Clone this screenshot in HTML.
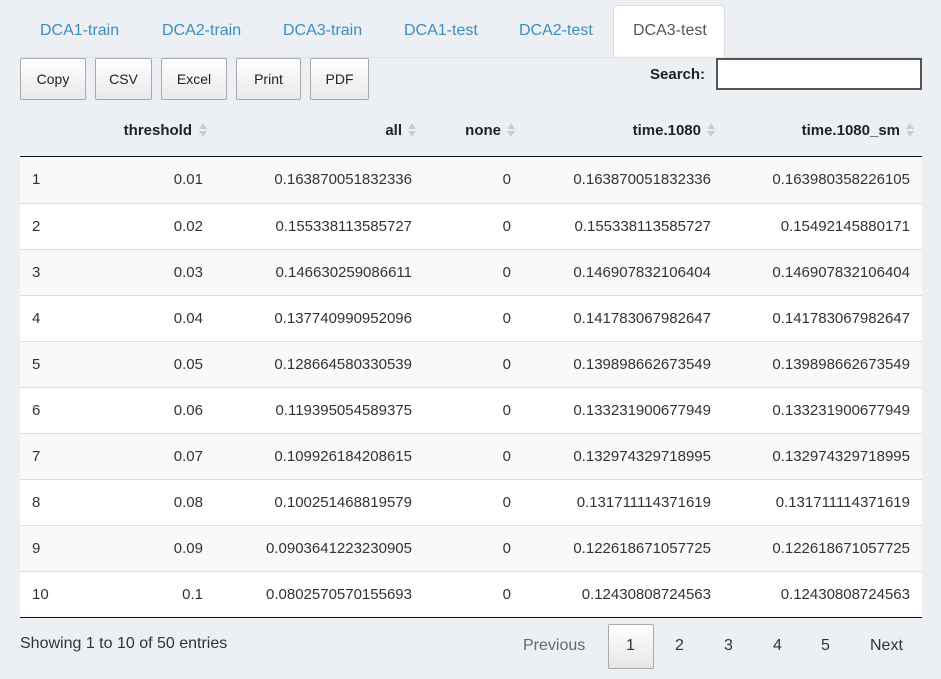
<!DOCTYPE html>
<html><head><meta charset="utf-8"><style>
*{box-sizing:border-box;margin:0;padding:0}
body{width:941px;height:679px;background:#ecf0f5;font-family:"Liberation Sans",sans-serif;color:#333;position:relative;overflow:hidden}
.a{position:absolute;white-space:nowrap}
.tab{position:absolute;top:22px;font-size:16px;color:#3c8dbc}
.tabline{position:absolute;left:20px;top:57px;width:902px;height:1px;background:#dde1e6}
.act{position:absolute;left:613px;top:5px;width:112px;height:53px;background:#fff;border:1px solid #ddd;border-bottom:none;border-radius:4px 4px 0 0}
.btn{position:absolute;top:58px;height:42px;border:1px solid #aaa;border-radius:2px;background:linear-gradient(#fff,#e9e9e9);font-size:14px;color:#222;display:flex;align-items:center;justify-content:center}
.tbl{position:absolute;left:20px;top:156px;width:902px;border-top:1px solid #111;border-bottom:1px solid #111}
.row{height:46px;border-top:1px solid #ddd;position:relative;font-size:15px}
.row:first-child{border-top:none}
.row:nth-child(odd){background:#f9f9f9}
.row:nth-child(even){background:#fff}
.c{position:absolute;top:14px;white-space:nowrap}
.h{position:absolute;top:122px;font-size:15px;font-weight:bold;color:#222}
.s{position:absolute;top:121px;width:8px;height:18px}
.pg{position:absolute;top:637px;font-size:16px}
</style></head><body>
<div class="act"></div>
<div class="tabline"></div>
<div class="tab" style="left:40px">DCA1-train</div>
<div class="tab" style="left:162px">DCA2-train</div>
<div class="tab" style="left:283px">DCA3-train</div>
<div class="tab" style="left:404px">DCA1-test</div>
<div class="tab" style="left:519px">DCA2-test</div>
<div class="tab" style="left:633px;color:#555">DCA3-test</div>

<div class="btn" style="left:20px;width:66px">Copy</div>
<div class="btn" style="left:95px;width:57px">CSV</div>
<div class="btn" style="left:161px;width:66px">Excel</div>
<div class="btn" style="left:236px;width:65px">Print</div>
<div class="btn" style="left:310px;width:59px">PDF</div>
<div class="a" style="left:650px;top:66px;font-size:15px;font-weight:bold;color:#222">Search:</div>
<div class="a" style="left:716px;top:58px;width:206px;height:32px;border:2px solid #555;background:#fff"></div>

<div class="h" style="right:749px">threshold</div>
<div class="h" style="right:539px">all</div>
<div class="h" style="right:440px">none</div>
<div class="h" style="right:240px">time.1080</div>
<div class="h" style="right:41px">time.1080_sm</div>
<svg class="s" style="left:199px" viewBox="0 0 8 18"><path d="M0 8L4 2L8 8Z M0 10L4 16L8 10Z" fill="#ccc"/></svg>
<svg class="s" style="left:408px" viewBox="0 0 8 18"><path d="M0 8L4 2L8 8Z M0 10L4 16L8 10Z" fill="#ccc"/></svg>
<svg class="s" style="left:507px" viewBox="0 0 8 18"><path d="M0 8L4 2L8 8Z M0 10L4 16L8 10Z" fill="#ccc"/></svg>
<svg class="s" style="left:707px" viewBox="0 0 8 18"><path d="M0 8L4 2L8 8Z M0 10L4 16L8 10Z" fill="#ccc"/></svg>
<svg class="s" style="left:906px" viewBox="0 0 8 18"><path d="M0 8L4 2L8 8Z M0 10L4 16L8 10Z" fill="#ccc"/></svg>

<div class="tbl">
<div class="row"><span class="c" style="left:12px">1</span><span class="c" style="right:719px">0.01</span><span class="c" style="right:510px">0.163870051832336</span><span class="c" style="right:411px">0</span><span class="c" style="right:211px">0.163870051832336</span><span class="c" style="right:12px">0.163980358226105</span></div>
<div class="row"><span class="c" style="left:12px">2</span><span class="c" style="right:719px">0.02</span><span class="c" style="right:510px">0.155338113585727</span><span class="c" style="right:411px">0</span><span class="c" style="right:211px">0.155338113585727</span><span class="c" style="right:12px">0.15492145880171</span></div>
<div class="row"><span class="c" style="left:12px">3</span><span class="c" style="right:719px">0.03</span><span class="c" style="right:510px">0.146630259086611</span><span class="c" style="right:411px">0</span><span class="c" style="right:211px">0.146907832106404</span><span class="c" style="right:12px">0.146907832106404</span></div>
<div class="row"><span class="c" style="left:12px">4</span><span class="c" style="right:719px">0.04</span><span class="c" style="right:510px">0.137740990952096</span><span class="c" style="right:411px">0</span><span class="c" style="right:211px">0.141783067982647</span><span class="c" style="right:12px">0.141783067982647</span></div>
<div class="row"><span class="c" style="left:12px">5</span><span class="c" style="right:719px">0.05</span><span class="c" style="right:510px">0.128664580330539</span><span class="c" style="right:411px">0</span><span class="c" style="right:211px">0.139898662673549</span><span class="c" style="right:12px">0.139898662673549</span></div>
<div class="row"><span class="c" style="left:12px">6</span><span class="c" style="right:719px">0.06</span><span class="c" style="right:510px">0.119395054589375</span><span class="c" style="right:411px">0</span><span class="c" style="right:211px">0.133231900677949</span><span class="c" style="right:12px">0.133231900677949</span></div>
<div class="row"><span class="c" style="left:12px">7</span><span class="c" style="right:719px">0.07</span><span class="c" style="right:510px">0.109926184208615</span><span class="c" style="right:411px">0</span><span class="c" style="right:211px">0.132974329718995</span><span class="c" style="right:12px">0.132974329718995</span></div>
<div class="row"><span class="c" style="left:12px">8</span><span class="c" style="right:719px">0.08</span><span class="c" style="right:510px">0.100251468819579</span><span class="c" style="right:411px">0</span><span class="c" style="right:211px">0.131711114371619</span><span class="c" style="right:12px">0.131711114371619</span></div>
<div class="row"><span class="c" style="left:12px">9</span><span class="c" style="right:719px">0.09</span><span class="c" style="right:510px">0.0903641223230905</span><span class="c" style="right:411px">0</span><span class="c" style="right:211px">0.122618671057725</span><span class="c" style="right:12px">0.122618671057725</span></div>
<div class="row"><span class="c" style="left:12px">10</span><span class="c" style="right:719px">0.1</span><span class="c" style="right:510px">0.0802570570155693</span><span class="c" style="right:411px">0</span><span class="c" style="right:211px">0.12430808724563</span><span class="c" style="right:12px">0.12430808724563</span></div>
</div>

<div class="a" style="left:20px;top:635px;font-size:16px">Showing 1 to 10 of 50 entries</div>
<div class="pg" style="left:523px;color:#666">Previous</div>
<div class="a" style="left:608px;top:624px;width:46px;height:45px;border:1px solid #aaa;border-radius:2px;background:linear-gradient(#fff,#e6e6e6)"></div>
<div class="pg" style="left:626px">1</div>
<div class="pg" style="left:675px">2</div>
<div class="pg" style="left:724px">3</div>
<div class="pg" style="left:773px">4</div>
<div class="pg" style="left:821px">5</div>
<div class="pg" style="left:870px">Next</div>
</body></html>
